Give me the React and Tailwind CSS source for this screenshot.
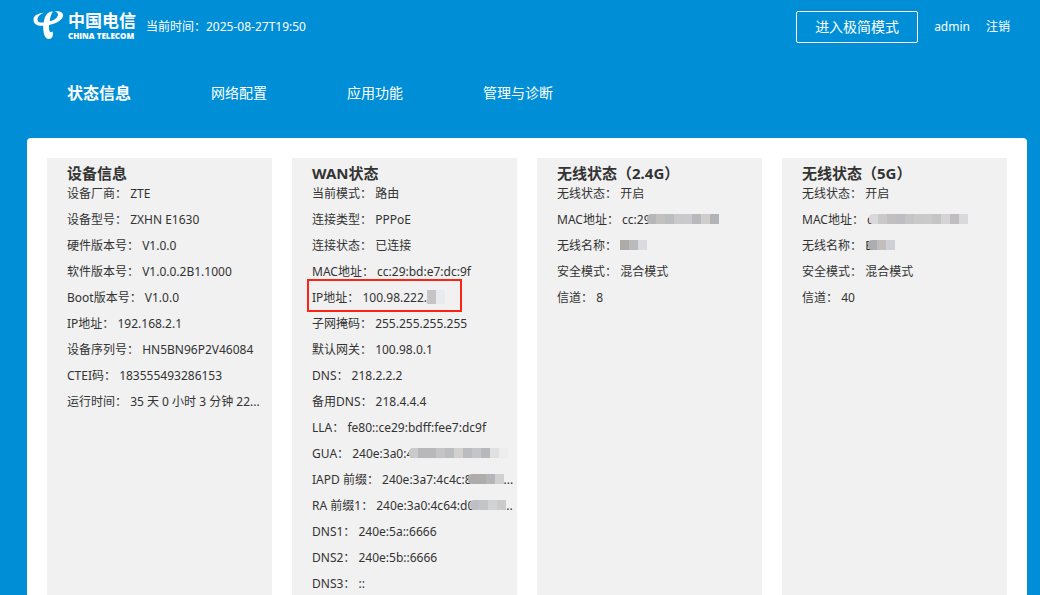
const tabs = ['状态信息', '网络配置', '应用功能', '管理与诊断']

const mosaics = {
  ip: ['bg-[#c6c4c4]', 'bg-[#e8ebee]'],
  gua: ['bg-[#c9cacc]', 'bg-[#b8b8b9]', 'bg-[#b8b8ba]', 'bg-[#c5c3c3]', 'bg-[#bcbdc1]', 'bg-[#d1d0cf]', 'bg-[#bbbcbe]', 'bg-[#c4c5c8]', 'bg-[#b7b8bb]', 'bg-[#dfe1e0]', 'bg-[#ededed]'],
  iapd: ['bg-[#aeabab]', 'bg-[#afacac]', 'bg-[#b5b6ba]', 'bg-[#cfd0d2]'],
  ra: ['bg-[#bec0c5]', 'bg-[#c4c4c7]', 'bg-[#d0d2d4]', 'bg-[#cbcbcb]'],
  mac24: ['bg-[#b5b5ba]', 'bg-[#c3c1c0]', 'bg-[#bcbdc1]', 'bg-[#cac9ca]', 'bg-[#c9cacd]', 'bg-[#b9b9bd]', 'bg-[#d0cecd]', 'bg-[#b3b4b7]'],
  name24: ['bg-[#acaba8]', 'bg-[#b9babe]', 'bg-[#d9dbde]'],
  mac5: ['bg-[#d8d8da]', 'bg-[#cbc8ca]', 'bg-[#c1c0c1]', 'bg-[#bdbdc3]', 'bg-[#c5c4c7]', 'bg-[#cac9ca]', 'bg-[#cbcac8]', 'bg-[#c2c4c6]', 'bg-[#d5d4d5]', 'bg-[#bfbdc0]', 'bg-[#d9d9dc]'],
  name5: ['bg-[#acadb1]', 'bg-[#c2bebc]', 'bg-[#cdd1d5]'],
}

const panels = [
  {
    title: '设备信息',
    rows: [
      { label: '设备厂商', value: 'ZTE' },
      { label: '设备型号', value: 'ZXHN E1630' },
      { label: '硬件版本号', value: 'V1.0.0' },
      { label: '软件版本号', value: 'V1.0.0.2B1.1000' },
      { label: 'Boot版本号', value: 'V1.0.0' },
      { label: 'IP地址', value: '192.168.2.1' },
      { label: '设备序列号', value: 'HN5BN96P2V46084' },
      { label: 'CTEI码', value: '183555493286153' },
      { label: '运行时间', value: '35 天 0 小时 3 分钟 22...' },
    ],
  },
  {
    title: 'WAN状态',
    rows: [
      { label: '当前模式', value: '路由' },
      { label: '连接类型', value: 'PPPoE' },
      { label: '连接状态', value: '已连接' },
      { label: 'MAC地址', value: 'cc:29:bd:e7:dc:9f' },
      { label: 'IP地址', value: '100.98.222.', mask: 'ip', marked: true },
      { label: '子网掩码', value: '255.255.255.255' },
      { label: '默认网关', value: '100.98.0.1' },
      { label: 'DNS', value: '218.2.2.2' },
      { label: '备用DNS', value: '218.4.4.4' },
      { label: 'LLA', value: 'fe80::ce29:bdff:fee7:dc9f' },
      { label: 'GUA', value: '240e:3a0:4', mask: 'gua' },
      { label: 'IAPD 前缀', value: '240e:3a7:4c4c:8', mask: 'iapd', tail: '...' },
      { label: 'RA 前缀1', value: '240e:3a0:4c64:d0', mask: 'ra', tail: '..' },
      { label: 'DNS1', value: '240e:5a::6666' },
      { label: 'DNS2', value: '240e:5b::6666' },
      { label: 'DNS3', value: '::' },
    ],
  },
  {
    title: '无线状态（2.4G）',
    rows: [
      { label: '无线状态', value: '开启' },
      { label: 'MAC地址', value: 'cc:29', mask: 'mac24' },
      { label: '无线名称', value: '', mask: 'name24' },
      { label: '安全模式', value: '混合模式' },
      { label: '信道', value: '8' },
    ],
  },
  {
    title: '无线状态（5G）',
    rows: [
      { label: '无线状态', value: '开启' },
      { label: 'MAC地址', value: 'c', mask: 'mac5' },
      { label: '无线名称', value: 'E', mask: 'name5' },
      { label: '安全模式', value: '混合模式' },
      { label: '信道', value: '40' },
    ],
  },
]

function Logo() {
  return (
    <a href="#home" className="flex items-center gap-1 pb-1">
      <svg viewBox="0 0 90 84" className="h-7 w-[31px]" fill="currentColor" aria-hidden="true">
        <path d="M32 5C16 6 0 12 0 26c0 14 14 20 29 18 0 20 4 40 17 40 12 0 14-13 11-23-3 5-9 3-10-5-1-5-1-9 0-14 22-4 42-16 42-29C89 3 77-1 62 1c9 2 13 7 11 13-3 8-13 14-24 17 0-10 3-20 9-29-16-2-25 14-27 32-11 2-19-1-19-8 0-10 9-18 20-21z" />
      </svg>
      <span className="flex flex-col">
        <span className="text-[17px] leading-[22px] font-bold">中国电信</span>
        <span className="font-['Open_Sans',sans-serif] text-[8px] leading-[8px] font-extrabold">CHINA TELECOM</span>
      </span>
    </a>
  )
}

function Mosaic({ name, overlap }) {
  return (
    <span className={overlap ? 'z-10 mb-0.5 -ml-1 flex overflow-hidden rounded-l-sm' : 'mb-0.5 flex'}>
      {mosaics[name].map((color, index) => (
        <span key={index} className={`w-[9px] ${name === 'ip' ? 'h-3.5' : 'h-[10px]'} ${color}`} />
      ))}
    </span>
  )
}

function Row({ label, value, mask, tail, marked }) {
  return (
    <div className="relative flex items-center whitespace-pre">
      <dt>{label}： </dt>
      <dd className="flex items-center">
        {value}
        {mask && <Mosaic name={mask} overlap={value !== '' && !marked} />}
        {tail}
      </dd>
      {marked && <span className="absolute -top-1.5 -left-[5px] z-20 h-[33px] w-[155px] border-2 border-[#fb2415]" />}
    </div>
  )
}

function Panel({ title, rows }) {
  return (
    <section className="min-w-0 overflow-hidden bg-[#f1f1f1] px-5 pt-[7px]">
      <h2 className="text-[15px] leading-4 font-bold">{title}</h2>
      <dl className="text-xs leading-[26px]">
        {rows.map((row) => (
          <Row key={row.label} {...row} />
        ))}
      </dl>
    </section>
  )
}

export default function App() {
  return (
    <div className="flex min-h-screen flex-col bg-[#008fd7] pr-[13px] pl-[27px] font-['Noto_Sans','Noto_Sans_CJK_SC',sans-serif] text-white">
      <header className="flex h-[54px] items-center justify-between pr-[17px] pl-[6px] text-xs">
        <div className="flex items-center gap-[10px]">
          <Logo />
          <span>当前时间：2025-08-27T19:50</span>
        </div>
        <div className="flex items-center">
          <button type="button" className="h-8 rounded-xs border border-white px-[18px] text-sm">进入极简模式</button>
          <a href="#admin" className="ml-4">admin</a>
          <a href="#logout" className="ml-4">注销</a>
        </div>
      </header>

      <nav className="flex h-[84px] items-start gap-20 pt-7 pl-10 text-sm leading-[22px]">
        {tabs.map((tab, index) => (
          <a key={tab} href={`#tab-${index}`} className={index === 0 ? 'text-base leading-[22px] font-bold' : ''}>
            {tab}
          </a>
        ))}
      </nav>

      <main className="grid flex-1 grid-cols-4 gap-5 rounded-t-sm bg-white px-5 pt-5 text-[#333]">
        {panels.map((panel) => (
          <Panel key={panel.title} {...panel} />
        ))}
      </main>
    </div>
  )
}
